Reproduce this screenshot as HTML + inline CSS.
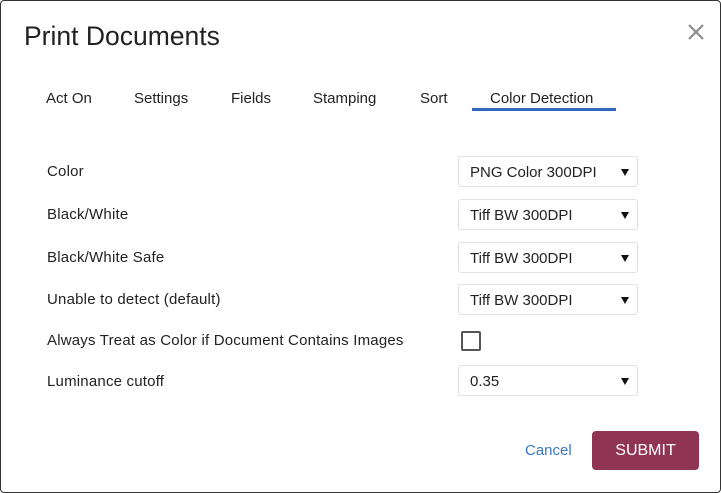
<!DOCTYPE html>
<html><head><style>
body{margin:0;width:721px;height:493px;background:#fff;font-family:"Liberation Sans",sans-serif;overflow:hidden}
.d{position:absolute;left:0;top:0;width:719px;height:491px;border:1px solid #333;border-radius:4px;background:#fff}
.t{position:absolute;left:23px;top:20px;font-size:26.5px;color:#222}
.x{position:absolute;left:687px;top:23px}
.tab{position:absolute;top:89px;font-size:15px;color:#222}
.ul{position:absolute;left:471px;top:107px;width:144px;height:3px;background:#2f6bbf}
.l{position:absolute;left:46px;font-size:15px;color:#222;letter-spacing:0.2px}
.s{position:absolute;left:457px;width:180px;height:31px;border:1px solid #e2e2e2;border-radius:3px;box-sizing:border-box;font-size:15px;color:#222;padding:7px 0 0 11px}
.s:after{content:"";position:absolute;right:8px;top:12px;border-left:4px solid transparent;border-right:4px solid transparent;border-top:7px solid #111}
.cb{position:absolute;left:460px;top:330px;width:16px;height:16px;border:2px solid #555;border-radius:2px}
.c{position:absolute;left:524px;top:441px;font-size:15px;color:#3a78c6}
.b{position:absolute;left:591px;top:430px;width:107px;height:39px;background:#8f3553;border-radius:4px;color:#fff;font-size:16px;text-align:center;line-height:39px}
</style></head><body><div class="d">
<div class="t">Print Documents</div>
<svg class="x" width="16" height="16" viewBox="0 0 16 16"><path d="M1 1L15 15M15 1L1 15" stroke="#888" stroke-width="2"/></svg>
<div class="tab" style="left:45px">Act On</div>
<div class="tab" style="left:133px">Settings</div>
<div class="tab" style="left:230px">Fields</div>
<div class="tab" style="left:312px">Stamping</div>
<div class="tab" style="left:419px">Sort</div>
<div class="tab" style="left:489px">Color Detection</div>
<div class="ul"></div>
<div class="l" style="top:162px">Color</div>
<div class="l" style="top:205px">Black/White</div>
<div class="l" style="top:248px">Black/White Safe</div>
<div class="l" style="top:290px">Unable to detect (default)</div>
<div class="l" style="top:331px">Always Treat as Color if Document Contains Images</div>
<div class="l" style="top:372px">Luminance cutoff</div>
<div class="s" style="top:155px">PNG Color 300DPI</div>
<div class="s" style="top:198px">Tiff BW 300DPI</div>
<div class="s" style="top:241px">Tiff BW 300DPI</div>
<div class="s" style="top:283px">Tiff BW 300DPI</div>
<div class="cb"></div>
<div class="s" style="top:364px">0.35</div>
<div class="c">Cancel</div>
<div class="b">SUBMIT</div>
</div></body></html>
